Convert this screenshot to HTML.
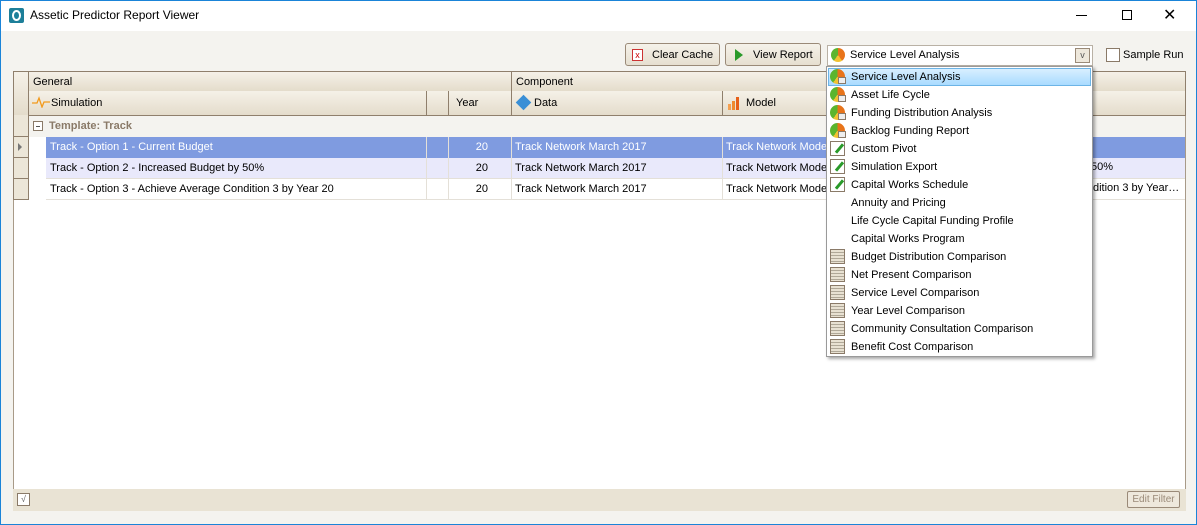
<!DOCTYPE html>
<html><head><style>
*{box-sizing:border-box;margin:0;padding:0}
body{width:1197px;height:525px;overflow:hidden;font-family:"Liberation Sans",sans-serif;font-size:11px;color:#000;background:#f4f3ef;position:relative}
.win{position:absolute;left:0;top:0;width:1197px;height:525px;border:1px solid #1a84d8}
.title{position:absolute;left:1px;top:1px;width:1195px;height:30px;background:#fff}
.a{position:absolute;white-space:nowrap}
.hdr{position:absolute;background:linear-gradient(#f5f1e8,#e4dccb);border-left:1px solid #8f7f6c;border-bottom:1px solid #8f7f6c}
.btn{position:absolute;border:1px solid #9a8a78;border-radius:3px;background:linear-gradient(#f5f2ea,#e6dfd0);height:23px;top:43px}
.cell{position:absolute;height:21px;line-height:20px;padding-left:4px;border-right:1px solid #e4e0d8;white-space:nowrap;overflow:hidden}
.dd{position:absolute;left:826px;top:66px;width:267px;height:291px;background:#fff;border:1px solid #9a9a9a;box-shadow:2px 2px 3px rgba(0,0,0,.35)}
.it{position:absolute;left:24px;height:18px;line-height:18px;white-space:nowrap}
.ic{position:absolute;left:3px;width:15px;height:15px}
</style></head><body>
<div class="win"></div>
<div class="title">
 <div class="a" style="left:8px;top:7px;width:15px;height:15px;background:#1d7f99;border-radius:2px"><div style="position:absolute;left:3px;top:2px;width:9px;height:11px;border:2px solid #fff;border-radius:50%"></div></div>
 <div class="a" style="left:29px;top:7px;font-size:12px">Assetic Predictor Report Viewer</div>
 <div class="a" style="left:1075px;top:14px;width:11px;height:1px;background:#000"></div>
 <div class="a" style="left:1121px;top:9px;width:10px;height:10px;border:1px solid #000"></div>
 <div class="a" style="left:1162px;top:4px;font-size:16px">✕</div>
</div>
<!-- toolbar -->
<div class="btn" style="left:625px;width:95px"><div class="a" style="left:6px;top:5px;width:11px;height:12px;border:1px solid #c33;background:#fff;color:#c00;font-size:9px;line-height:10px;text-align:center">x</div><div class="a" style="left:26px;top:5px">Clear Cache</div></div>
<div class="btn" style="left:725px;width:96px"><div class="a" style="left:9px;top:5px;width:0;height:0;border-left:8px solid #2a9a2a;border-top:6px solid transparent;border-bottom:6px solid transparent"></div><div class="a" style="left:27px;top:5px">View Report</div></div>
<div class="a" style="left:827px;top:45px;width:266px;height:21px;background:#fff;border:1px solid #b9b1a5">
 <div class="a" style="left:3px;top:2px;width:14px;height:14px;border-radius:50%;background:conic-gradient(#e8741a 0 40%,#f1c232 0 60%,#5ab52e 0)"></div>
 <div class="a" style="left:22px;top:3px">Service Level Analysis</div>
 <div class="a" style="left:247px;top:2px;width:15px;height:15px;border:1px solid #9a8a78;background:#eee8dc;font-size:9px;text-align:center;line-height:13px;color:#555">v</div>
</div>
<div class="a" style="left:1106px;top:48px;width:14px;height:14px;border:1px solid #8a7a68;background:#fff"></div>
<div class="a" style="left:1123px;top:49px;font-size:11px">Sample Run</div>
<!-- grid -->
<div class="a" style="left:13px;top:71px;width:1173px;height:440px;background:#fff;border:1px solid #a89a88"></div>
<div class="hdr" style="left:13px;top:71px;width:16px;height:45px;border-top:1px solid #8f7f6c"></div>
<div class="hdr" style="left:28px;top:71px;width:484px;height:21px;border-top:1px solid #8f7f6c"><span class="a" style="left:4px;top:4px">General</span></div>
<div class="hdr" style="left:511px;top:71px;width:675px;height:21px;border-top:1px solid #8f7f6c;border-right:1px solid #8f7f6c"><span class="a" style="left:4px;top:4px">Component</span></div>
<div class="hdr" style="left:28px;top:91px;width:399px;height:25px"><svg class="a" style="left:3px;top:5px" width="18" height="12"><path d="M0 7H5L7 2L10 11L12 6H18" fill="none" stroke="#f29a1c" stroke-width="1.3"/></svg><span class="a" style="left:22px;top:6px">Simulation</span></div>
<div class="hdr" style="left:426px;top:91px;width:23px;height:25px"></div>
<div class="hdr" style="left:448px;top:91px;width:64px;height:25px"><span class="a" style="left:7px;top:6px">Year</span></div>
<div class="hdr" style="left:511px;top:91px;width:212px;height:25px"><span class="a" style="left:6px;top:6px;width:11px;height:11px;background:#3a8fd6;transform:rotate(45deg)"></span><span class="a" style="left:22px;top:6px">Data</span></div>
<div class="hdr" style="left:722px;top:91px;width:464px;height:25px;border-right:1px solid #8f7f6c"><svg class="a" style="left:5px;top:4px" width="14" height="15"><rect x="0" y="9" width="3" height="6" fill="#f5a050"/><rect x="4" y="6" width="3" height="9" fill="#ef8a30"/><rect x="8" y="2" width="3" height="13" fill="#e6601a"/></svg><span class="a" style="left:23px;top:6px">Model</span></div>
<div class="a" style="left:13px;top:115px;width:16px;height:85px;background:#ece6d8;border-right:1px solid #8f7f6c;border-left:1px solid #8f7f6c"></div>
<div class="a" style="left:13px;top:136px;width:16px;height:1px;background:#8f7f6c"></div>
<div class="a" style="left:13px;top:157px;width:16px;height:1px;background:#8f7f6c"></div>
<div class="a" style="left:13px;top:178px;width:16px;height:1px;background:#8f7f6c"></div>
<div class="a" style="left:13px;top:199px;width:16px;height:1px;background:#8f7f6c"></div>
<div class="a" style="left:18px;top:143px;border-left:4px solid #777;border-top:4px solid transparent;border-bottom:4px solid transparent"></div>
<div class="a" style="left:29px;top:116px;width:1156px;height:21px;background:#f4f3ef"></div>
<div class="a" style="left:33px;top:121px;width:10px;height:10px;border:1px solid #8a7a68;background:#fff"><div style="position:absolute;left:2px;top:4px;width:4px;height:1px;background:#555"></div></div>
<div class="a" style="left:49px;top:120px;font-weight:bold;color:#8a7a68">Template: Track</div>
<div class="a" style="left:46px;top:137px;width:1139px;height:21px;background:#7f9be0;color:#fff">
 <div class="cell" style="left:0;width:381px">Track - Option 1 - Current Budget</div><div class="cell" style="left:380px;width:23px"></div>
 <div class="cell" style="left:402px;width:64px;text-align:right;padding-right:23px">20</div>
 <div class="cell" style="left:465px;width:212px">Track Network March 2017</div><div class="cell" style="left:676px;width:120px">Track Network Model</div></div>
<div class="a" style="left:46px;top:158px;width:1139px;height:21px;background:#e9e9fb;border-bottom:1px solid #e4e0d8">
 <div class="cell" style="left:0;width:381px">Track - Option 2 - Increased Budget by 50%</div><div class="cell" style="left:380px;width:23px"></div>
 <div class="cell" style="left:402px;width:64px;text-align:right;padding-right:23px">20</div>
 <div class="cell" style="left:465px;width:212px">Track Network March 2017</div><div class="cell" style="left:676px;width:120px">Track Network Model</div><div class="a" style="left:1045px;top:3px">50%</div></div>
<div class="a" style="left:46px;top:179px;width:1139px;height:21px;background:#fff;border-bottom:1px solid #e4e0d8">
 <div class="cell" style="left:0;width:381px">Track - Option 3 - Achieve Average Condition 3 by Year 20</div><div class="cell" style="left:380px;width:23px"></div>
 <div class="cell" style="left:402px;width:64px;text-align:right;padding-right:23px">20</div>
 <div class="cell" style="left:465px;width:212px">Track Network March 2017</div><div class="cell" style="left:676px;width:120px">Track Network Model</div><div class="a" style="left:1047px;top:3px">dition 3 by Year…</div></div>
<!-- footer -->
<div class="a" style="left:13px;top:489px;width:1173px;height:22px;background:#e9e3d4"></div>
<div class="a" style="left:17px;top:493px;width:13px;height:13px;border:1px solid #8a7a68;background:#fff;font-size:9px;line-height:11px;text-align:center;color:#666">√</div>
<div class="a" style="left:1127px;top:491px;width:53px;height:17px;border:1px solid #9a8a78;border-radius:2px;background:#eee8dc;color:#9a8a78;font-size:10px;line-height:15px;text-align:center">Edit Filter</div>
<!-- dropdown -->
<div class="dd">
 <div class="a" style="left:1px;top:1px;width:263px;height:18px;background:linear-gradient(#d8efff,#a9dbff);border:1px solid #6cb4e6"></div>
 <div id="items"></div>
</div>
<script>
var items=[["Service Level Analysis","p"],["Asset Life Cycle","p"],["Funding Distribution Analysis","p"],["Backlog Funding Report","p"],["Custom Pivot","e"],["Simulation Export","e"],["Capital Works Schedule","e"],["Annuity and Pricing",""],["Life Cycle Capital Funding Profile",""],["Capital Works Program",""],["Budget Distribution Comparison","c"],["Net Present Comparison","c"],["Service Level Comparison","c"],["Year Level Comparison","c"],["Community Consultation Comparison","c"],["Benefit Cost Comparison","c"]];
var h="";items.forEach(function(t,i){var y=1+i*18;
if(t[1]=="p")h+='<div class="ic" style="top:'+(y+1)+'px;border-radius:50%;background:conic-gradient(#e8741a 0 40%,#f1c232 0 60%,#5ab52e 0)"></div><div class="a" style="left:11px;top:'+(y+9)+'px;width:8px;height:7px;border:1px solid #8a7a68;background:#eee"></div>';
if(t[1]=="e")h+='<div class="ic" style="top:'+(y+1)+'px;border:1px solid #8a7a68;background:#fff"><div style="position:absolute;left:3px;top:5px;width:11px;height:3px;background:#2a9a2a;transform:rotate(-50deg)"></div></div>';
if(t[1]=="c")h+='<div class="ic" style="top:'+(y+1)+'px;border:1px solid #8a7a68;background:repeating-linear-gradient(#e8e1d2 0 2px,#b0a898 2px 3px)"></div>';
h+='<div class="it" style="top:'+y+'px">'+t[0]+'</div>';});
document.getElementById("items").innerHTML=h;
</script>
</body></html>
